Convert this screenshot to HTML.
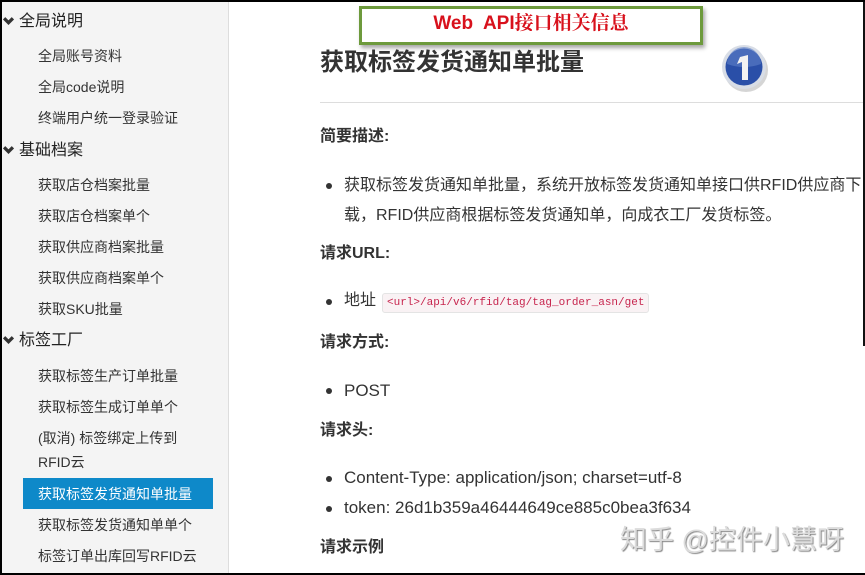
<!DOCTYPE html>
<html><head><meta charset="utf-8"><style>
*{margin:0;padding:0;box-sizing:border-box}
body{width:865px;height:575px;position:relative;overflow:hidden;background:#fff;font-family:"Liberation Sans","Noto Sans CJK SC",sans-serif;color:#333}
.a{position:absolute;white-space:nowrap;line-height:1}
#frame{position:absolute;left:0;top:0;width:865px;height:575px;border-top:2px solid #000;border-left:2px solid #000;border-bottom:2px solid #000;pointer-events:none}
#side{position:absolute;left:0;top:0;width:229px;height:575px;background:#f4f4f4;border-right:1px solid #ddd}
.h{font-size:16px;color:#222;left:19px}
.s{font-size:14px;color:#333;left:38px}
.chev{position:absolute;left:3px;width:11px;height:11px}
.b{font-size:16px;font-weight:bold;color:#333;left:320px}
.t{font-size:16px;color:#333;left:344px}
.dot{position:absolute;left:326px;width:6px;height:6px;border-radius:50%;background:#333}
</style></head><body>
<div id="side"></div>
<svg class="chev" style="top:15px" viewBox="0 0 10 10"><path d="M1 3 L5 7 L9 3" stroke="#333" stroke-width="3" fill="none"/></svg>
<div class="a h" style="top:14px">全局说明</div>
<div class="a s" style="top:49px">全局账号资料</div>
<div class="a s" style="top:80px">全局code说明</div>
<div class="a s" style="top:111px">终端用户统一登录验证</div>
<svg class="chev" style="top:144px" viewBox="0 0 10 10"><path d="M1 3 L5 7 L9 3" stroke="#333" stroke-width="3" fill="none"/></svg>
<div class="a h" style="top:143px">基础档案</div>
<div class="a s" style="top:178px">获取店仓档案批量</div>
<div class="a s" style="top:209px">获取店仓档案单个</div>
<div class="a s" style="top:240px">获取供应商档案批量</div>
<div class="a s" style="top:271px">获取供应商档案单个</div>
<div class="a s" style="top:302px">获取SKU批量</div>
<svg class="chev" style="top:334px" viewBox="0 0 10 10"><path d="M1 3 L5 7 L9 3" stroke="#333" stroke-width="3" fill="none"/></svg>
<div class="a h" style="top:333px">标签工厂</div>
<div class="a s" style="top:369px">获取标签生产订单批量</div>
<div class="a s" style="top:400px">获取标签生成订单单个</div>
<div class="a s" style="top:431px">(取消) 标签绑定上传到</div>
<div class="a s" style="top:455px">RFID云</div>
<div style="position:absolute;left:23px;top:478px;width:190px;height:31px;background:#0e89c9"></div>
<div class="a s" style="top:487px;color:#fff">获取标签发货通知单批量</div>
<div class="a s" style="top:518px">获取标签发货通知单单个</div>
<div class="a s" style="top:549px">标签订单出库回写RFID云</div>

<div style="position:absolute;left:359px;top:6px;width:344px;height:39px;border:3px solid #6d9a3c;box-shadow:2px 3px 4px rgba(0,0,0,.35);background:#fff"></div>
<div class="a" style="left:359px;width:344px;top:14px;text-align:center;font-size:19px;font-weight:bold;color:#d8111c;font-family:'Liberation Sans','Noto Serif CJK SC',serif">Web&nbsp; API接口相关信息</div>
<div class="a" style="left:320px;top:51px;font-size:24px;font-weight:bold;color:#333">获取标签发货通知单批量</div>
<svg style="position:absolute;left:719px;top:42px" width="54" height="54" viewBox="0 0 54 54">
<circle cx="27" cy="28" r="22" fill="#888" opacity=".35"/>
<circle cx="25" cy="25" r="22" fill="#d8dde6"/>
<circle cx="25" cy="25" r="18.5" fill="#2a4fa8"/>
<path d="M8 22 A17 17 0 0 1 42 22 Q25 28 8 22Z" fill="#5f80c8" opacity=".6"/>
<path d="M21 15 L29 13 L29 38 L23 38 L23 20 L18 22Z" fill="#f2f2f2"/>
</svg>
<div style="position:absolute;left:320px;top:102px;width:545px;height:1px;background:#ddd"></div>
<div style="position:absolute;left:863px;top:0;width:2px;height:346px;background:#111"></div>

<div class="a b" style="top:129px">简要描述:</div>
<div class="dot" style="top:183px"></div>
<div class="a t" style="top:178px">获取标签发货通知单批量，系统开放标签发货通知单接口供RFID供应商下</div>
<div class="a t" style="top:208px">载，RFID供应商根据标签发货通知单，向成衣工厂发货标签。</div>
<div class="a b" style="top:246px">请求URL:</div>
<div class="dot" style="top:299px"></div>
<div class="a t" style="top:293px">地址</div>
<div class="a" style="left:382px;top:293px;height:20px;padding:4px 4px;border:1px solid #e4e4e4;border-radius:3px;background:#f9f2f4;font-family:'Liberation Mono',monospace;font-size:11px;color:#c7254e">&lt;url&gt;/api/v6/rfid/tag/tag_order_asn/get</div>
<div class="a b" style="top:335px">请求方式:</div>
<div class="dot" style="top:388px"></div>
<div class="a t" style="top:382px;font-size:17px">POST</div>
<div class="a b" style="top:423px">请求头:</div>
<div class="dot" style="top:476px"></div>
<div class="a t" style="top:469px;font-size:17px">Content-Type: application/json; charset=utf-8</div>
<div class="dot" style="top:506px"></div>
<div class="a t" style="top:499px;font-size:17px">token: 26d1b359a46444649ce885c0bea3f634</div>
<div class="a b" style="top:540px">请求示例</div>
<div class="a" style="left:620px;top:527px;font-size:27px;color:#dcdcdc;text-shadow:1px 1px 1px #888">知乎 @控件小慧呀</div>
<div id="frame"></div>
</body></html>
